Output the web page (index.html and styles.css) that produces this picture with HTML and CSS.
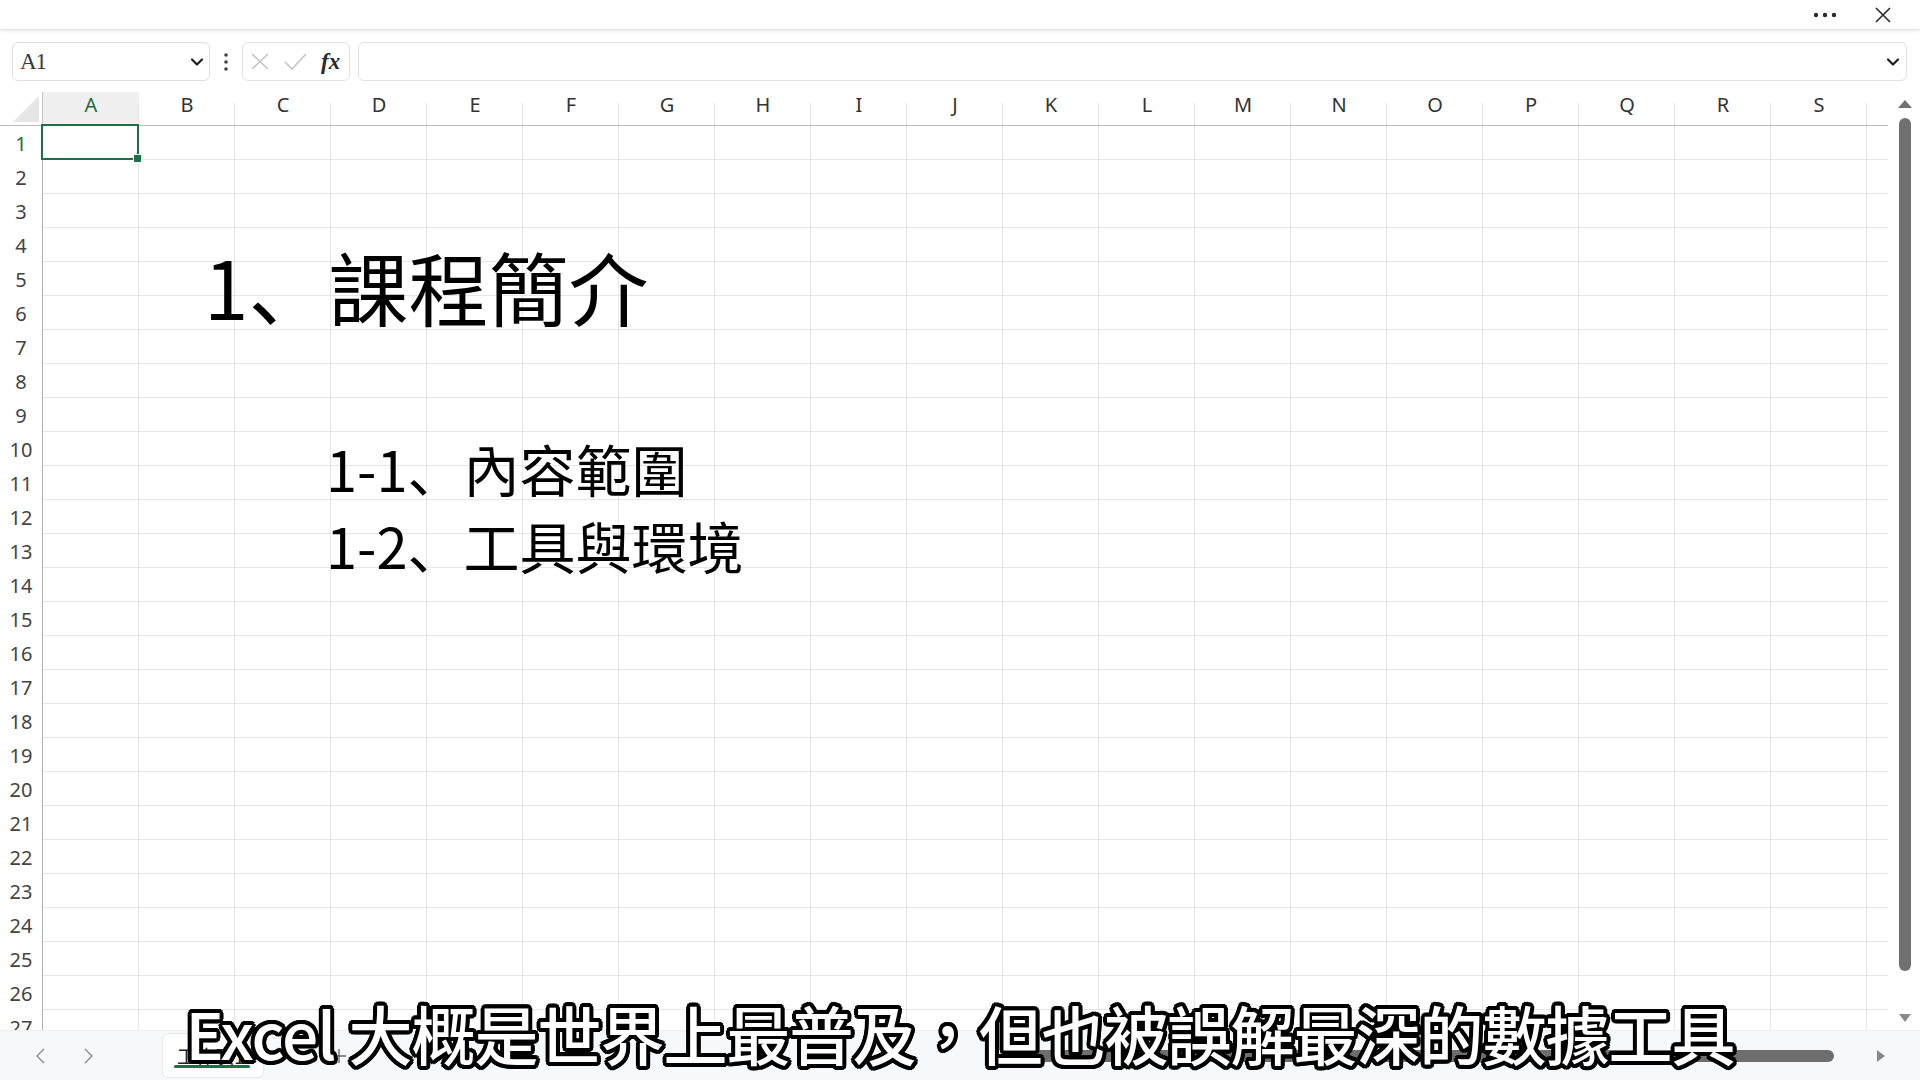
FILE: index.html
```html
<!DOCTYPE html>
<html lang="zh-Hant">
<head>
<meta charset="utf-8">
<title>Excel</title>
<link rel="stylesheet" href="styles.css">
</head>
<body>
<div class="app">
  <header class="topbar">
    <svg class="tb-more" width="24" height="6" viewBox="0 0 24 6"><circle cx="3" cy="3" r="2.2"/><circle cx="12" cy="3" r="2.2"/><circle cx="21" cy="3" r="2.2"/></svg>
    <svg class="tb-close" width="16" height="16" viewBox="0 0 16 16"><path d="M1 1L15 15M15 1L1 15"/></svg>
  </header>

  <div class="formula-row">
    <div class="namebox">
      <span class="ref">A1</span>
      <svg class="chev" width="12" height="8" viewBox="0 0 12 8"><path d="M1 1.5L6 6.5L11 1.5"/></svg>
    </div>
    <div class="vdots">
      <svg width="4" height="18" viewBox="0 0 4 18"><circle cx="2" cy="2" r="1.8"/><circle cx="2" cy="9" r="1.8"/><circle cx="2" cy="16" r="1.8"/></svg>
    </div>
    <div class="fxbox">
      <svg class="fx-x" width="18" height="17" viewBox="0 0 18 17"><path d="M1 1L17 16M17 1L1 16"/></svg>
      <svg class="fx-check" width="23" height="17" viewBox="0 0 23 17"><path d="M1 9L8 16L22 1"/></svg>
      <span class="fx">fx</span>
    </div>
    <div class="finput">
      <svg class="chev" width="12" height="8" viewBox="0 0 12 8"><path d="M1 1.5L6 6.5L11 1.5"/></svg>
    </div>
  </div>

  <div class="sheet">
    <div class="sheet-main">
      <div class="colheads">
        <div class="corner"><svg width="26" height="26" viewBox="0 0 26 26"><polygon points="26,0 26,26 0,26"/></svg></div>
        <div class="colhead sel">A</div>
        <div class="colhead">B</div>
        <div class="colhead">C</div>
        <div class="colhead">D</div>
        <div class="colhead">E</div>
        <div class="colhead">F</div>
        <div class="colhead">G</div>
        <div class="colhead">H</div>
        <div class="colhead">I</div>
        <div class="colhead">J</div>
        <div class="colhead">K</div>
        <div class="colhead">L</div>
        <div class="colhead">M</div>
        <div class="colhead">N</div>
        <div class="colhead">O</div>
        <div class="colhead">P</div>
        <div class="colhead">Q</div>
        <div class="colhead">R</div>
        <div class="colhead">S</div>
        <div class="colhead"></div>
      </div>
      <div class="grid-body">
        <div class="rowheads">
          <div class="rowhead sel">1</div>
          <div class="rowhead">2</div>
          <div class="rowhead">3</div>
          <div class="rowhead">4</div>
          <div class="rowhead">5</div>
          <div class="rowhead">6</div>
          <div class="rowhead">7</div>
          <div class="rowhead">8</div>
          <div class="rowhead">9</div>
          <div class="rowhead">10</div>
          <div class="rowhead">11</div>
          <div class="rowhead">12</div>
          <div class="rowhead">13</div>
          <div class="rowhead">14</div>
          <div class="rowhead">15</div>
          <div class="rowhead">16</div>
          <div class="rowhead">17</div>
          <div class="rowhead">18</div>
          <div class="rowhead">19</div>
          <div class="rowhead">20</div>
          <div class="rowhead">21</div>
          <div class="rowhead">22</div>
          <div class="rowhead">23</div>
          <div class="rowhead">24</div>
          <div class="rowhead">25</div>
          <div class="rowhead">26</div>
          <div class="rowhead">27</div>
        </div>
        <div class="cells">
          <div class="selcell"></div>
          <div class="content">
            <div class="title">1<span class="dun" lang="ja">、</span>課程簡介</div>
            <div class="items">
              <div class="item">1-1<span class="dun" lang="ja">、</span>內容範圍</div>
              <div class="item">1-2<span class="dun" lang="ja">、</span>工具與環境</div>
            </div>
          </div>
        </div>
      </div>
    </div>
    <div class="vscroll">
      <svg class="vs-up" width="14" height="8" viewBox="0 0 14 8"><polygon points="7,0 14,8 0,8"/></svg>
      <div class="vs-thumb"></div>
      <svg class="vs-down" width="12" height="8" viewBox="0 0 12 8"><polygon points="0,0 12,0 6,8"/></svg>
    </div>
  </div>

  <footer class="tabbar">
    <svg class="nav nav-prev" width="9" height="16" viewBox="0 0 9 16"><path d="M8 1L1 8L8 15"/></svg>
    <svg class="nav nav-next" width="9" height="16" viewBox="0 0 9 16"><path d="M1 1L8 8L1 15"/></svg>
    <div class="tab"><span class="tab-name">工作表1</span><span class="tab-line"></span></div>
    <svg class="add" width="16" height="16" viewBox="0 0 16 16"><path d="M8 1V15M1 8H15"/></svg>
    <div class="hs-track"><div class="hs-thumb"></div></div>
    <svg class="hs-right" width="8" height="12" viewBox="0 0 8 12"><polygon points="0,0 8,6 0,12"/></svg>
  </footer>

  <div class="subtitle">Excel 大概是世界上最普及，但也被誤解最深的數據工具</div>
</div>
</body>
</html>
```

FILE: styles.css
```css
* { box-sizing: border-box; margin: 0; padding: 0; }
html, body { width: 1920px; height: 1080px; overflow: hidden; background: #fff; }
body { font-family: "Noto Sans", "Noto Sans CJK TC", sans-serif; color: #333; }

.app { position: relative; width: 1920px; height: 1080px; display: flex; flex-direction: column; }

/* top bar */
.topbar {
  height: 30px; flex: none; display: flex; justify-content: flex-end; align-items: center;
  gap: 38px; padding-right: 29px; background: #fff;
  border-bottom: 1px solid #e3e6e9; box-shadow: 0 1px 3px rgba(0, 0, 0, .10);
  position: relative; z-index: 2;
}
.tb-more circle { fill: #2b2b2b; }
.tb-close path { stroke: #2b2b2b; stroke-width: 1.6; fill: none; }

/* formula row */
.formula-row { height: 62px; flex: none; display: flex; align-items: flex-start; padding: 12px 13px 0 12px; }
.namebox {
  width: 198px; height: 39px; border: 1px solid #dedede; border-radius: 6px;
  display: flex; align-items: center; justify-content: space-between; padding: 0 6px 0 7px;
}
.ref { font-family: "Liberation Serif", serif; font-size: 23px; color: #3a3a3a; letter-spacing: -1px; }
.chev path { stroke: #1f1f1f; stroke-width: 2.2; fill: none; stroke-linecap: round; stroke-linejoin: round; }
.vdots { width: 32px; height: 39px; display: flex; align-items: center; justify-content: center; }
.vdots circle { fill: #444; }
.fxbox {
  width: 108px; height: 39px; border: 1px solid #e2e2e2; border-radius: 6px;
  display: flex; align-items: center; padding-left: 8px;
}
.fx-x path, .fx-check path { stroke: #c6c6c6; stroke-width: 1.7; fill: none; }
.fx-check { margin-left: 15px; }
.fx { margin-left: 14px; font-family: "Liberation Serif", serif; font-style: italic; font-weight: 700; font-size: 23px; color: #2a2a2a; }
.finput {
  flex: 1; margin-left: 8px; height: 39px; border: 1px solid #e2e2e2; border-radius: 6px;
  display: flex; align-items: center; justify-content: flex-end; padding-right: 7px;
}

/* sheet */
.sheet { flex: 1; display: flex; min-height: 0; }
.sheet-main { width: 1888px; flex: none; display: flex; flex-direction: column; overflow: hidden; }
.colheads { height: 34px; flex: none; display: flex; border-bottom: 1px solid #bdbdbd; }
.corner {
  width: 43px; flex: none; border-right: 1px solid #c4c4c4;
  display: flex; align-items: flex-end; justify-content: flex-end; padding: 0 3px 3px 0;
}
.corner polygon { fill: #e6e6e6; }
.colhead {
  width: 96px; flex: none; position: relative; text-align: center;
  font-size: 20px; line-height: 26px; color: #333;
}
.colhead::after { content: ""; position: absolute; right: 0; top: 11px; bottom: 0; width: 1px; background: #e4e4e4; }
.colhead.sel { background: #f0f0f0; color: #1e6b41; }

.grid-body { flex: 1; display: flex; min-height: 0; }
.rowheads { width: 43px; flex: none; border-right: 1px solid #b0b0b0; }
.rowhead { height: 34px; font-size: 20px; line-height: 36px; text-align: center; color: #444; }
.rowhead.sel { color: #1e6b41; }

.cells {
  flex: 1; position: relative;
  background-image:
    linear-gradient(to right, #e6e6e6 1px, transparent 1px),
    linear-gradient(to bottom, #e6e6e6 1px, transparent 1px);
  background-size: 96px 34px, 96px 34px;
  background-position: 95px 0, 0 33px;
}
.selcell {
  position: absolute; left: -2px; top: -2px; width: 98px; height: 36px;
  border: 2px solid #1e7145; z-index: 1;
}
.selcell::after {
  content: ""; position: absolute; right: -5px; bottom: -5px; width: 7px; height: 7px;
  background: #1e7145; border: 1px solid #fff;
}
.content { padding: 119px 0 0 161px; color: #000; font-family: "Noto Sans CJK TC", sans-serif; }
.title { font-size: 80px; line-height: 80px; white-space: nowrap; }
.items { margin-top: 115px; padding-left: 122px; display: flex; flex-direction: column; gap: 21px; }
.item { font-size: 56px; line-height: 56px; white-space: nowrap; }
.dun { font-family: "Noto Sans CJK JP", "Noto Sans CJK SC", sans-serif; }

/* vertical scrollbar */
.vscroll { width: 32px; flex: none; display: flex; flex-direction: column; align-items: center; padding-left: 1px; }
.vs-up { margin-top: 8px; }
.vs-up polygon { fill: #707070; }
.vs-thumb { width: 12px; height: 853px; margin-top: 10px; border-radius: 6px; background: #707070; }
.vs-down { margin-top: 43px; }
.vs-down polygon { fill: #8a8a8a; }

/* sheet tab bar */
.tabbar {
  height: 50px; flex: none; display: flex; align-items: center;
  background: #f6f8f9; border-top: 1px solid #eceef0; padding-left: 36px;
}
.nav path { stroke: #8c8c8c; stroke-width: 1.4; fill: none; }
.nav-next { margin-left: 39px; }
.tab {
  position: relative; margin-left: 69px; width: 102px; height: 45px; align-self: flex-start; margin-top: 2px;
  background: #fff; border: 1px solid #e6e8ea; border-radius: 6px;
  display: flex; align-items: center; padding-left: 14px;
}
.tab-name { font-family: "Noto Sans CJK TC", sans-serif; font-size: 19px; color: #222; }
.tab-line { position: absolute; left: 11px; bottom: 9px; width: 76px; height: 3px; border-radius: 2px; background: #1e7145; }
.add { margin-left: 67px; }
.add path { stroke: #666; stroke-width: 1.3; fill: none; }
.hs-track { flex: 1; height: 12px; display: flex; justify-content: flex-end; }
.hs-thumb { width: 830px; height: 12px; border-radius: 6px; background: #6e6e6e; }
.hs-right { margin-left: 43px; margin-right: 35px; }
.hs-right polygon { fill: #8a8a8a; }

/* subtitle overlay */
.subtitle {
  position: absolute; left: 0; right: 0; top: 1000px; z-index: 5;
  text-align: center; white-space: nowrap;
  font-family: "Noto Sans CJK TC", sans-serif; font-weight: 500; font-size: 64px; line-height: 64px;
  letter-spacing: -1px; color: #fff;
  text-shadow:
    4px 0 0 #000, -4px 0 0 #000, 0 4px 0 #000, 0 -4px 0 #000,
    3px 3px 0 #000, -3px 3px 0 #000, 3px -3px 0 #000, -3px -3px 0 #000,
    3.7px 1.5px 0 #000, -3.7px 1.5px 0 #000, 3.7px -1.5px 0 #000, -3.7px -1.5px 0 #000,
    1.5px 3.7px 0 #000, -1.5px 3.7px 0 #000, 1.5px -3.7px 0 #000, -1.5px -3.7px 0 #000,
    2px 0 0 #000, -2px 0 0 #000, 0 2px 0 #000, 0 -2px 0 #000;
}
```
